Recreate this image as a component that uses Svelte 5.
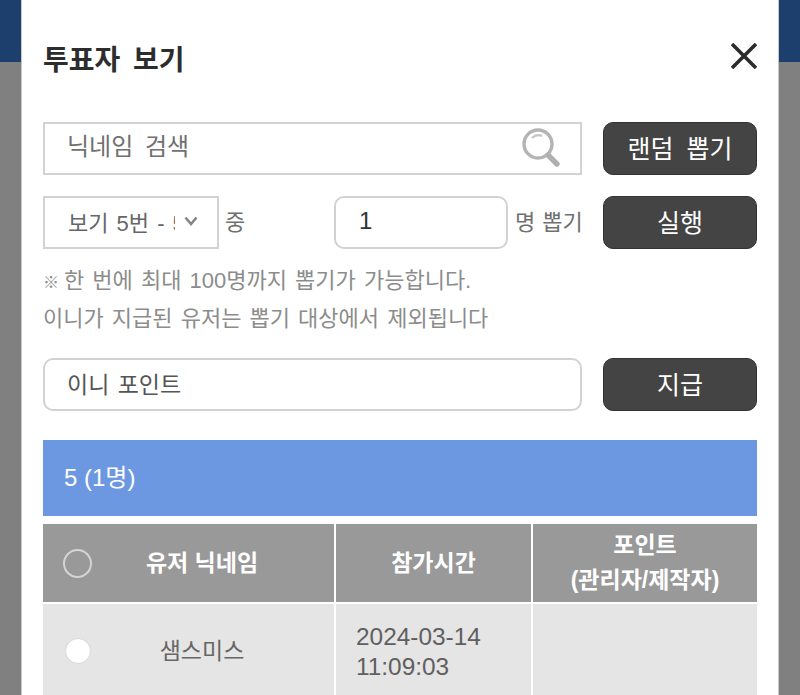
<script>
  let rows = [{ name: '샘스미스', date: '2024-03-14', time: '11:09:03', point: '' }];
</script>

<div class="page">
  <div class="modal">
    <div class="head">
      <h2>투표자 보기</h2>
      <button class="close" aria-label="닫기">
        <svg width="26" height="26" viewBox="0 0 26 26"><path d="M1 1 L25 25 M25 1 L1 25" stroke="#2b2b2b" stroke-width="3.6" fill="none"/></svg>
      </button>
    </div>

    <div class="line">
      <div class="search">
        <span>닉네임 검색</span>
        <svg class="glass" width="40" height="40" viewBox="0 0 40 40">
          <circle cx="17" cy="16" r="14" fill="none" stroke="#b4b4b4" stroke-width="3.4"/>
          <path d="M11 10 A9 9 0 0 1 21 8" fill="none" stroke="#c4c4c4" stroke-width="2"/>
          <path d="M27 27 L36 36" stroke="#b0b0b0" stroke-width="5.4" stroke-linecap="round"/>
        </svg>
      </div>
      <button class="btn">랜덤 뽑기</button>
    </div>

    <div class="line second">
      <div class="pick">
        <div class="select">
          <span class="val">보기 5번 - 5</span>
          <svg width="14" height="10" viewBox="0 0 14 10"><path d="M1.5 1.5 L7 8 L12.5 1.5" fill="none" stroke="#858585" stroke-width="2.6"/></svg>
        </div>
        <span class="lbl jung">중</span>
        <div class="num">1</div>
        <span class="lbl">명 뽑기</span>
      </div>
      <button class="btn">실행</button>
    </div>

    <p class="note"><span class="mark">※</span>한 번에 최대 100명까지 뽑기가 가능합니다.<br />이니가 지급된 유저는 뽑기 대상에서 제외됩니다</p>

    <div class="line third">
      <div class="points">이니 포인트</div>
      <button class="btn">지급</button>
    </div>

    <div class="bar">5 (1명)</div>

    <div class="table">
      <div class="th c1"><i class="radio"></i><span>유저 닉네임</span></div>
      <div class="th">참가시간</div>
      <div class="th">포인트<br />(관리자/제작자)</div>
      {#each rows as r}
        <div class="td c1"><i class="radio on"></i><span>{r.name}</span></div>
        <div class="td left">{r.date}<br />{r.time}</div>
        <div class="td">{r.point}</div>
      {/each}
    </div>
  </div>
</div>

<style>
  :global(body) {
    margin: 0;
    background: #808080;
  }
  .page {
    height: 695px;
    overflow: hidden;
    padding: 0 21px;
    box-sizing: border-box;
    background: linear-gradient(#1d3f6e 62px, #808080 62px);
    font-family: "Liberation Sans", "Noto Sans CJK KR", sans-serif;
    color: #666;
  }
  .modal {
    background: #fff;
    box-sizing: border-box;
    height: 760px;
    padding: 0 21px;
    border-left: 1px solid #c8c8c8;
    border-right: 1px solid #c8c8c8;
  }
  .head {
    display: flex;
    justify-content: space-between;
    align-items: center;
    height: 122px;
    padding-bottom: 6px;
    box-sizing: border-box;
  }
  h2 {
    margin: 0;
    font-size: 28px;
    font-weight: 700;
    word-spacing: 5px;
    color: #2d2d2d;
  }
  .close {
    border: 0;
    background: none;
    padding: 0;
    display: flex;
    margin-top: -4px;
  }
  .line {
    display: flex;
    justify-content: space-between;
    gap: 21px;
  }
  .second { margin-top: 21px; }
  .third { margin-top: 21px; }
  .btn {
    width: 154px;
    height: 53px;
    flex: none;
    box-sizing: border-box;
    border: 1px solid #333;
    border-radius: 10px;
    background: #444;
    color: #fff;
    font: inherit;
    font-size: 25px;
    word-spacing: 6px;
    padding: 0 0 4px;
  }
  .search, .select, .num, .points {
    box-sizing: border-box;
    height: 53px;
    border: 2px solid #d2d2d2;
    background: #fff;
    display: flex;
    align-items: center;
    font-size: 24px;
  }
  .search {
    flex: 1;
    padding: 0 19px 8px 22px;
    justify-content: space-between;
    word-spacing: 5px;
    color: #707070;
  }
  .glass { margin-top: 6px; }
  .pick {
    flex: 1;
    min-width: 0;
    display: flex;
    align-items: center;
  }
  .select {
    width: 176px;
    flex: none;
    padding: 0 0 4px 23px;
    font-size: 22px;
    word-spacing: 2px;
    color: #666;
  }
  .val {
    width: 107px;
    overflow: hidden;
    white-space: nowrap;
    flex: none;
  }
  .select svg { margin-left: 9px; }
  .lbl {
    font-size: 22px;
    color: #707070;
    white-space: nowrap;
    flex: none;
    margin-bottom: 5px;
    word-spacing: 1px;
  }
  .jung {
    margin-left: 6px;
    width: 109px;
  }
  .num {
    width: 174px;
    flex: none;
    border-radius: 10px;
    padding: 0 0 4px 23px;
    margin-right: 7px;
    color: #333;
  }
  .note {
    margin: 14px 0 0;
    font-size: 22px;
    line-height: 36px;
    word-spacing: 2px;
    color: #8c8c8c;
    white-space: nowrap;
  }
  .mark {
    font-size: 16px;
    margin-right: 5px;
  }
  .points {
    flex: 1;
    border-radius: 10px;
    padding: 0 0 4px 22px;
    font-size: 23px;
    word-spacing: 2px;
    color: #555;
  }
  .bar {
    margin-top: 29px;
    height: 76px;
    box-sizing: border-box;
    background: #6c98e2;
    color: #fff;
    font-size: 24px;
    display: flex;
    align-items: center;
    padding: 0 0 6px 21px;
  }
  .table {
    margin-top: 8px;
    display: grid;
    grid-template-columns: 291px 195px 1fr;
    grid-template-rows: 78px 94px;
    gap: 2px;
  }
  .th, .td {
    display: flex;
    align-items: center;
    justify-content: center;
    text-align: center;
    font-size: 23px;
  }
  .th {
    background: #999;
    color: #fff;
    font-weight: 700;
    line-height: 35px;
  }
  .td {
    background: #e5e5e5;
    color: #666;
    line-height: 30px;
  }
  .left {
    justify-content: flex-start;
    text-align: left;
    padding: 2px 0 0 20px;
    font-size: 24.4px;
    color: #5f5f5f;
  }
  .c1 {
    justify-content: flex-start;
    padding-left: 20px;
  }
  .c1 span {
    width: 208px;
    margin-left: 6px;
  }
  .radio {
    box-sizing: border-box;
    width: 29px;
    height: 29px;
    border: 2px solid #d4d4d4;
    border-radius: 50%;
    flex: none;
  }
  .td .radio {
    width: 26px;
    height: 26px;
    margin: 0 1px 0 2px;
    border: 1px solid #d8d8d8;
  }
  .radio.on {
    background: #fff;
  }
</style>
